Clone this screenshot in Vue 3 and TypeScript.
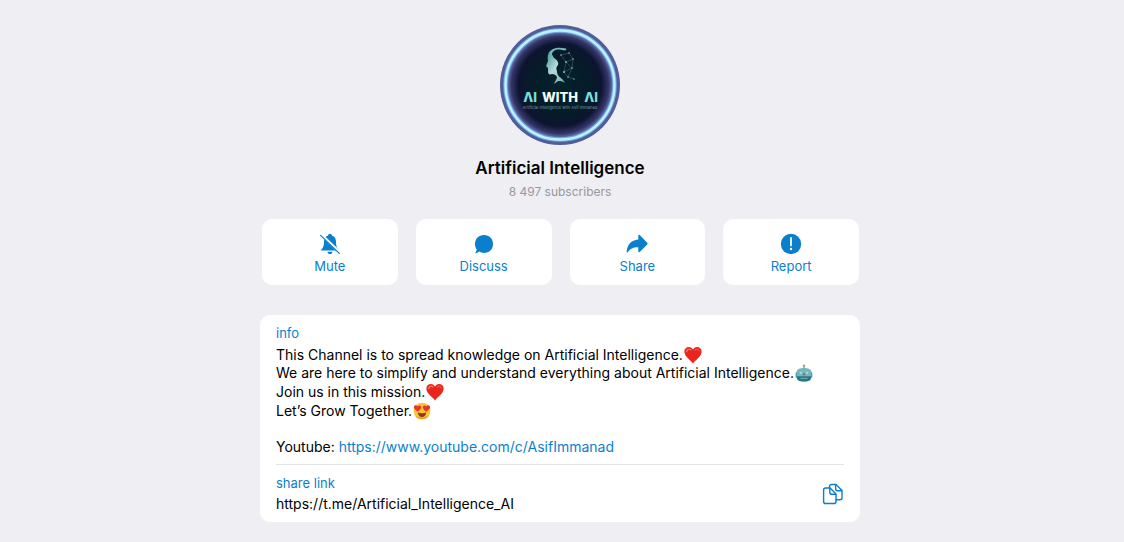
<script setup lang="ts">
type ActionName = 'mute' | 'discuss' | 'share' | 'report'
type EmojiName = 'heart' | 'robot' | 'eyes'

interface Action {
  name: ActionName
  label: string
}

interface Line {
  text: string
  emoji: EmojiName
  size: 'normal' | 'compact' | 'roomy'
}

const actions: Action[] = [
  { name: 'mute', label: 'Mute' },
  { name: 'discuss', label: 'Discuss' },
  { name: 'share', label: 'Share' },
  { name: 'report', label: 'Report' },
]

const lines: Line[] = [
  { text: 'This Channel is to spread knowledge on Artificial Intelligence.', emoji: 'heart', size: 'normal' },
  { text: 'We are here to simplify and understand everything about Artificial Intelligence.', emoji: 'robot', size: 'compact' },
  { text: 'Join us in this mission.', emoji: 'heart', size: 'roomy' },
  { text: 'Let’s Grow Together.', emoji: 'eyes', size: 'roomy' },
]
</script>

<template>
  <main class="page">
    <div class="column">
      <header class="profile">
        <svg class="avatar" viewBox="0 0 120 120" role="img" aria-label="AI with AI">
          <defs>
            <radialGradient id="disc">
              <stop offset="0" stop-color="#03222b" />
              <stop offset="0.5" stop-color="#061c28" />
              <stop offset="0.74" stop-color="#0d1430" />
              <stop offset="0.87" stop-color="#343668" />
              <stop offset="0.96" stop-color="#7185c4" />
              <stop offset="1" stop-color="#8fb6e0" />
            </radialGradient>
            <linearGradient id="face" x1="0" y1="0" x2="1" y2="1">
              <stop offset="0" stop-color="#3f8f93" />
              <stop offset="0.5" stop-color="#b5dcda" />
              <stop offset="1" stop-color="#5fa5a5" />
            </linearGradient>
          </defs>
          <circle cx="60" cy="60" r="60" fill="#525c99" />
          <circle cx="60" cy="60" r="56" fill="url(#disc)" />
          <circle cx="60" cy="60" r="54.5" fill="none" stroke="#76a8e0" stroke-width="4.5" />
          <circle cx="60" cy="60" r="54.5" fill="none" stroke="#b9f3ff" stroke-width="2.4" />
          <path d="M50 26 C51 27 52 30 54 33 C57 35 59 37 58 40 C56 42 56 44 57 46 C57 49 58 51 61 53 C63 55 64 56 65 58 C62 56 60 56 58 56 L54 59 C55 56 57 54 57 52 C56 50 54 49 52 49 C49 50 48 49 48 46 L48 43 L46 41 L48 36 C47 32 48 28 50 26Z" fill="url(#face)" />
          <path d="M49.5 28 C51 22 60 22 66 23.5 C67 24.5 66 25.5 64 25.5 C58 23.5 53 24.5 51.5 30Z" fill="#6fb9ba" />
          <g fill="none" stroke="#39666d" stroke-width="0.6">
            <path d="M61 30 L69 28 L73 34 L66 37 L61 30 M66 37 L72 43 L64 47 L66 37 M73 34 L72 43 L68 52 L64 47 M68 52 L74 54" />
          </g>
          <g fill="#86bdbd">
            <circle cx="69" cy="28" r="0.8" /><circle cx="73" cy="34" r="0.8" />
            <circle cx="66" cy="37" r="0.9" /><circle cx="72" cy="43" r="0.8" />
            <circle cx="64" cy="47" r="1" /><circle cx="68" cy="52" r="0.8" />
            <circle cx="74" cy="54" r="0.7" /><circle cx="61" cy="30" r="0.8" />
          </g>
          <g class="wordmark" text-anchor="middle">
            <text x="30" y="77" fill="#79ddd9">ΛI</text>
            <text x="60" y="77" fill="#f0ffff">WITH</text>
            <text x="91" y="77" fill="#79ddd9">ΛI</text>
          </g>
          <text class="tagline" x="60" y="84" text-anchor="middle" fill="#6d9ba0">Artificial Intelligence with Asif Immanad</text>
        </svg>
        <h1 class="title">Artificial Intelligence</h1>
        <p class="subscribers">8 497 subscribers</p>
      </header>

      <div class="actions">
        <button v-for="action in actions" :key="action.name" type="button" class="action">
          <svg class="action-icon" viewBox="0 0 22 22" aria-hidden="true">
            <template v-if="action.name === 'mute'">
              <path d="M11 .8 C12.2 .8 12.8 1.5 12.9 2.5 C16 3.5 17 6 17 9 C17 13.5 18.2 15 20.4 17.6 H1.6 C3.8 15 5 13.5 5 9 C5 6 6 3.5 9.1 2.5 C9.2 1.5 9.8 .8 11 .8Z M8.4 18.7 H13.6 C13.3 20.3 12.4 21 11 21 C9.6 21 8.7 20.3 8.4 18.7Z" fill="currentColor" />
              <path d="M2.4 1.8 L20.8 19.6" stroke="#fff" stroke-width="2.8" />
              <path d="M1.6 2.4 L20.3 20.4" stroke="currentColor" stroke-width="1.3" stroke-linecap="round" />
            </template>
            <path v-else-if="action.name === 'discuss'" d="M11 2 C16.3 2 20 5.8 20 11 C20 16.2 16.3 20 11 20 C9.1 20 7.5 19.5 6.1 18.6 C5 19.7 3.6 20.3 2 20.2 C3 19.1 3.6 17.7 3.6 16.2 C2.5 14.7 2 13 2 11 C2 5.8 5.7 2 11 2Z" fill="currentColor" />
            <path v-else-if="action.name === 'share'" d="M12.3 2.5 C12.3 1.6 13 1.4 13.7 2 L21.2 9.7 C21.8 10.3 21.8 10.8 21.2 11.4 L13.7 18.9 C13 19.5 12.3 19.2 12.3 18.3 V14.2 C7.4 14.1 4.5 15.4 1.7 19.2 C1.1 19.9 .6 19.6 .7 18.7 C1.4 11.6 5.2 7.2 12.3 6.6Z" fill="currentColor" />
            <template v-else>
              <circle cx="11" cy="11" r="10.2" fill="currentColor" />
              <path d="M11 5 V12.4" stroke="#fff" stroke-width="1.8" stroke-linecap="round" />
              <circle cx="11" cy="16" r="1.2" fill="#fff" />
            </template>
          </svg>
          <span>{{ action.label }}</span>
        </button>
      </div>

      <section class="card">
        <div class="info">
          <h2 class="label">info</h2>
          <p v-for="line in lines" :key="line.text" class="line" :class="line.size">
            {{ line.text }}<svg class="emoji" viewBox="0 0 20 20" aria-hidden="true">
              <template v-if="line.emoji === 'heart'">
                <path d="M10 19.4 C7 15.5 .8 12 .4 6.5 C.2 .6 7.5 -.6 10 4 C12.5 -.6 19.8 .6 19.6 6.5 C19.2 12 13 15.5 10 19.4Z" fill="#e9251d" />
                <path d="M3 6.3 C3.2 3.6 6 2.8 7.6 4.3" fill="none" stroke="#ff7768" stroke-width="1.5" stroke-linecap="round" />
                <path d="M12.5 4.6 C14 2.9 16.4 3.4 17 5.4" fill="none" stroke="#fb5346" stroke-width="1.3" stroke-linecap="round" />
              </template>
              <template v-else-if="line.emoji === 'robot'">
                <path d="M10 2 V6" stroke="#8a8a7b" stroke-width="1.4" />
                <circle cx="10" cy="1.8" r="1.3" fill="#b99962" />
                <rect x=".7" y="8.5" width="18.6" height="7" rx="2" fill="#4b919b" />
                <path d="M1.8 9 C2 5.5 5.8 4.5 10 4.5 C14.2 4.5 18 5.5 18.2 9 V15 C18 18.5 15 19.5 10 19.5 C5 19.5 2 18.5 1.8 15Z" fill="#70b7be" />
                <path d="M1.9 13.5 H18.1 C18.1 18 15 19.5 10 19.5 C5 19.5 1.9 18 1.9 13.5Z" fill="#287783" />
                <circle cx="6.6" cy="9.7" r="1.4" fill="#a3d9df" /><circle cx="13.4" cy="9.7" r="1.4" fill="#a3d9df" />
                <path d="M10 9.5 L11.3 12.5 H8.7Z" fill="#a84c4c" />
                <path d="M6 16 H14" stroke="#6aabb1" stroke-width="1.2" />
              </template>
              <template v-else>
                <circle cx="10" cy="10" r="9.3" fill="#fbc52e" />
                <path d="M2 14.8 C5 20.8 15 20.8 18 14.8 C14.5 17.8 5.5 17.8 2 14.8Z" fill="#f49b24" />
                <path d="M5.4 10.7 C3 9 .7 7.8 1 5.4 C1.4 3.3 4.1 3 5.2 5 C6.6 3.2 9.2 3.9 9 6.2 C8.8 8.2 7 9.3 5.4 10.7Z M14.6 10.7 C17 9 19.3 7.8 19 5.4 C18.6 3.3 15.9 3 14.8 5 C13.4 3.2 10.8 3.9 11 6.2 C11.2 8.2 13 9.3 14.6 10.7Z" fill="#e7342c" />
                <path d="M5.5 11.8 C8 12.8 12 12.8 14.5 11.8 C14.3 15 12.8 16.7 10 16.7 C7.2 16.7 5.7 15 5.5 11.8Z" fill="#8c3b1c" />
              </template>
            </svg>
          </p>
          <p class="line youtube">
            Youtube: <a class="link" href="https://www.youtube.com/c/AsifImmanad">https://www.youtube.com/c/AsifImmanad</a>
          </p>
        </div>
        <div class="share">
          <div>
            <h2 class="label">share link</h2>
            <p class="line">https://t.me/Artificial_Intelligence_AI</p>
          </div>
          <button type="button" class="copy" aria-label="Copy link">
            <svg class="copy-icon" viewBox="0 0 22 22" fill="none" stroke="currentColor" stroke-width="1.4" stroke-linejoin="round" stroke-linecap="round" aria-hidden="true">
              <path d="M3.6 5 H8.1 L14 11 V18.4 C14 19.8 13.3 20.5 12 20.5 H3.6 C2.3 20.5 1.6 19.8 1.6 18.4 V7 C1.6 5.7 2.3 5 3.6 5Z" />
              <path d="M7.8 5.2 V9.2 C7.8 10.6 8.5 11.3 9.9 11.3 H13.8" />
              <path d="M7.5 4.8 V3.5 C7.5 2.2 8.2 1.5 9.5 1.5 H14 L20 7.5 V14.8 C20 16.1 19.3 16.8 18 16.8 H14.2" />
              <path d="M13.6 1.8 V5.7 C13.6 7.1 14.3 7.8 15.7 7.8 H19.7" />
            </svg>
          </button>
        </div>
      </section>
    </div>
  </main>
</template>

<style>
body {
  margin: 0;
  background: #efeef3;
}
</style>

<style scoped>
.page {
  display: flex;
  justify-content: center;
  padding: 25px 4px 20px 0;
  color: #000;
  font: 14px/18px Inter, "Liberation Sans", sans-serif;
}

.column {
  width: 100%;
  max-width: 600px;
}

h1,
h2,
p {
  margin: 0;
  font-weight: 400;
}

button {
  border: 0;
  font: inherit;
  color: #0b7fcc;
  cursor: pointer;
}

.profile {
  display: flex;
  flex-direction: column;
  align-items: center;
}

.avatar {
  width: 120px;
  height: 120px;
}

.wordmark {
  font: 800 13px Inter, sans-serif;
}

.tagline {
  font: 4px Inter, sans-serif;
}

.title {
  margin-top: 11px;
  font-size: 17px;
  font-weight: 600;
  line-height: 24px;
}

.subscribers {
  margin-top: 4px;
  color: #98989d;
  font-size: 12px;
  line-height: 16px;
}

.actions {
  display: grid;
  grid-template-columns: repeat(4, 1fr);
  gap: 18px;
  padding: 0 1px 0 2px;
  margin-top: 19px;
}

.action {
  display: flex;
  flex-direction: column;
  align-items: center;
  gap: 3px;
  padding: 14px 0 10px;
  border-radius: 10px;
  background: #fff;
  font-size: 13px;
  line-height: 17px;
}

.action-icon {
  width: 22px;
  height: 22px;
}

.card {
  margin-top: 30px;
  padding: 0 16px;
  border-radius: 10px;
  background: #fff;
}

.info {
  padding: 9px 0 8px;
  border-bottom: 1px solid #e4e4e6;
}

.label {
  margin-bottom: 4px;
  color: #0b7fcc;
  font-size: 13px;
  line-height: 18px;
}

.compact {
  line-height: 17px;
}

.roomy {
  line-height: 19px;
}

.emoji {
  width: 18px;
  height: 18px;
  margin: -4px 0 0 1px;
  vertical-align: -4px;
}

.youtube {
  margin-top: 18px;
}

.link {
  color: #0b7fcc;
  text-decoration: none;
}

.share {
  display: flex;
  align-items: center;
  justify-content: space-between;
  padding: 9px 0;
}

.share .label {
  margin-bottom: 3px;
}

.copy {
  padding: 0;
  background: none;
}

.copy-icon {
  display: block;
  width: 22px;
  height: 22px;
}
</style>
